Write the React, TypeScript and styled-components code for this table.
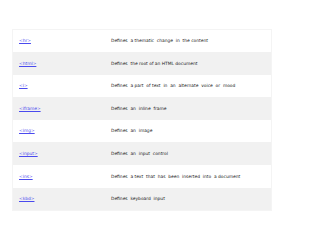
import React from 'react'
import styled, { createGlobalStyle } from 'styled-components'

const GlobalStyle = createGlobalStyle`
  html, body {
    margin: 0;
    padding: 0;
    background: #fff;
  }
  body {
    font-family: 'DejaVu Sans', Verdana, sans-serif;
  }
`

interface TagRow {
  tag: string
  desc: string
}

const ROWS: TagRow[] = [
  { tag: '<hr>', desc: 'Defines  a thematic  change  in  the content' },
  { tag: '<html>', desc: 'Defines  the root of an HTML document' },
  { tag: '<i>', desc: 'Defines  a part  of text  in  an  alternate  voice  or  mood' },
  { tag: '<iframe>', desc: 'Defines  an  inline  frame' },
  { tag: '<img>', desc: 'Defines  an  image' },
  { tag: '<input>', desc: 'Defines  an  input  control' },
  { tag: '<ins>', desc: 'Defines  a text  that  has  been  inserted  into  a document' },
  { tag: '<kbd>', desc: 'Defines  keyboard  input' }
]

const App: React.FC = () => {
  return (
    <>
      <GlobalStyle />
      <Page>
        <RefTable>
          <tbody>
            {ROWS.map((row, i) => (
              <Row key={row.tag} shaded={i % 2 === 1}>
                <TagCell>
                  <TagLink href='#'>{row.tag}</TagLink>
                </TagCell>
                <DescCell>{row.desc}</DescCell>
              </Row>
            ))}
          </tbody>
        </RefTable>
      </Page>
    </>
  )
}

export default App

const Page = styled.div`
  width: 320px;
  height: 247px;
  padding: 29px 0 0 12px;
  box-sizing: border-box;
`

const RefTable = styled.table`
  width: 260px;
  border-collapse: collapse;
  border: 1px solid #f4f4f4;
  font-size: 4.4px;
  line-height: 5.6px;
  color: #222;
`

const Row = styled.tr<{ shaded: boolean }>`
  height: 22.6px;
  background: ${p => (p.shaded ? '#f1f1f1' : '#fff')};
`

const TagCell = styled.td`
  width: 86px;
  padding: 0 0 0 6px;
  vertical-align: middle;
`

const DescCell = styled.td`
  padding: 0 0 0 6px;
  vertical-align: middle;
  white-space: pre;
`

const TagLink = styled.a`
  color: #4a4aee;
  text-decoration: underline;
`
